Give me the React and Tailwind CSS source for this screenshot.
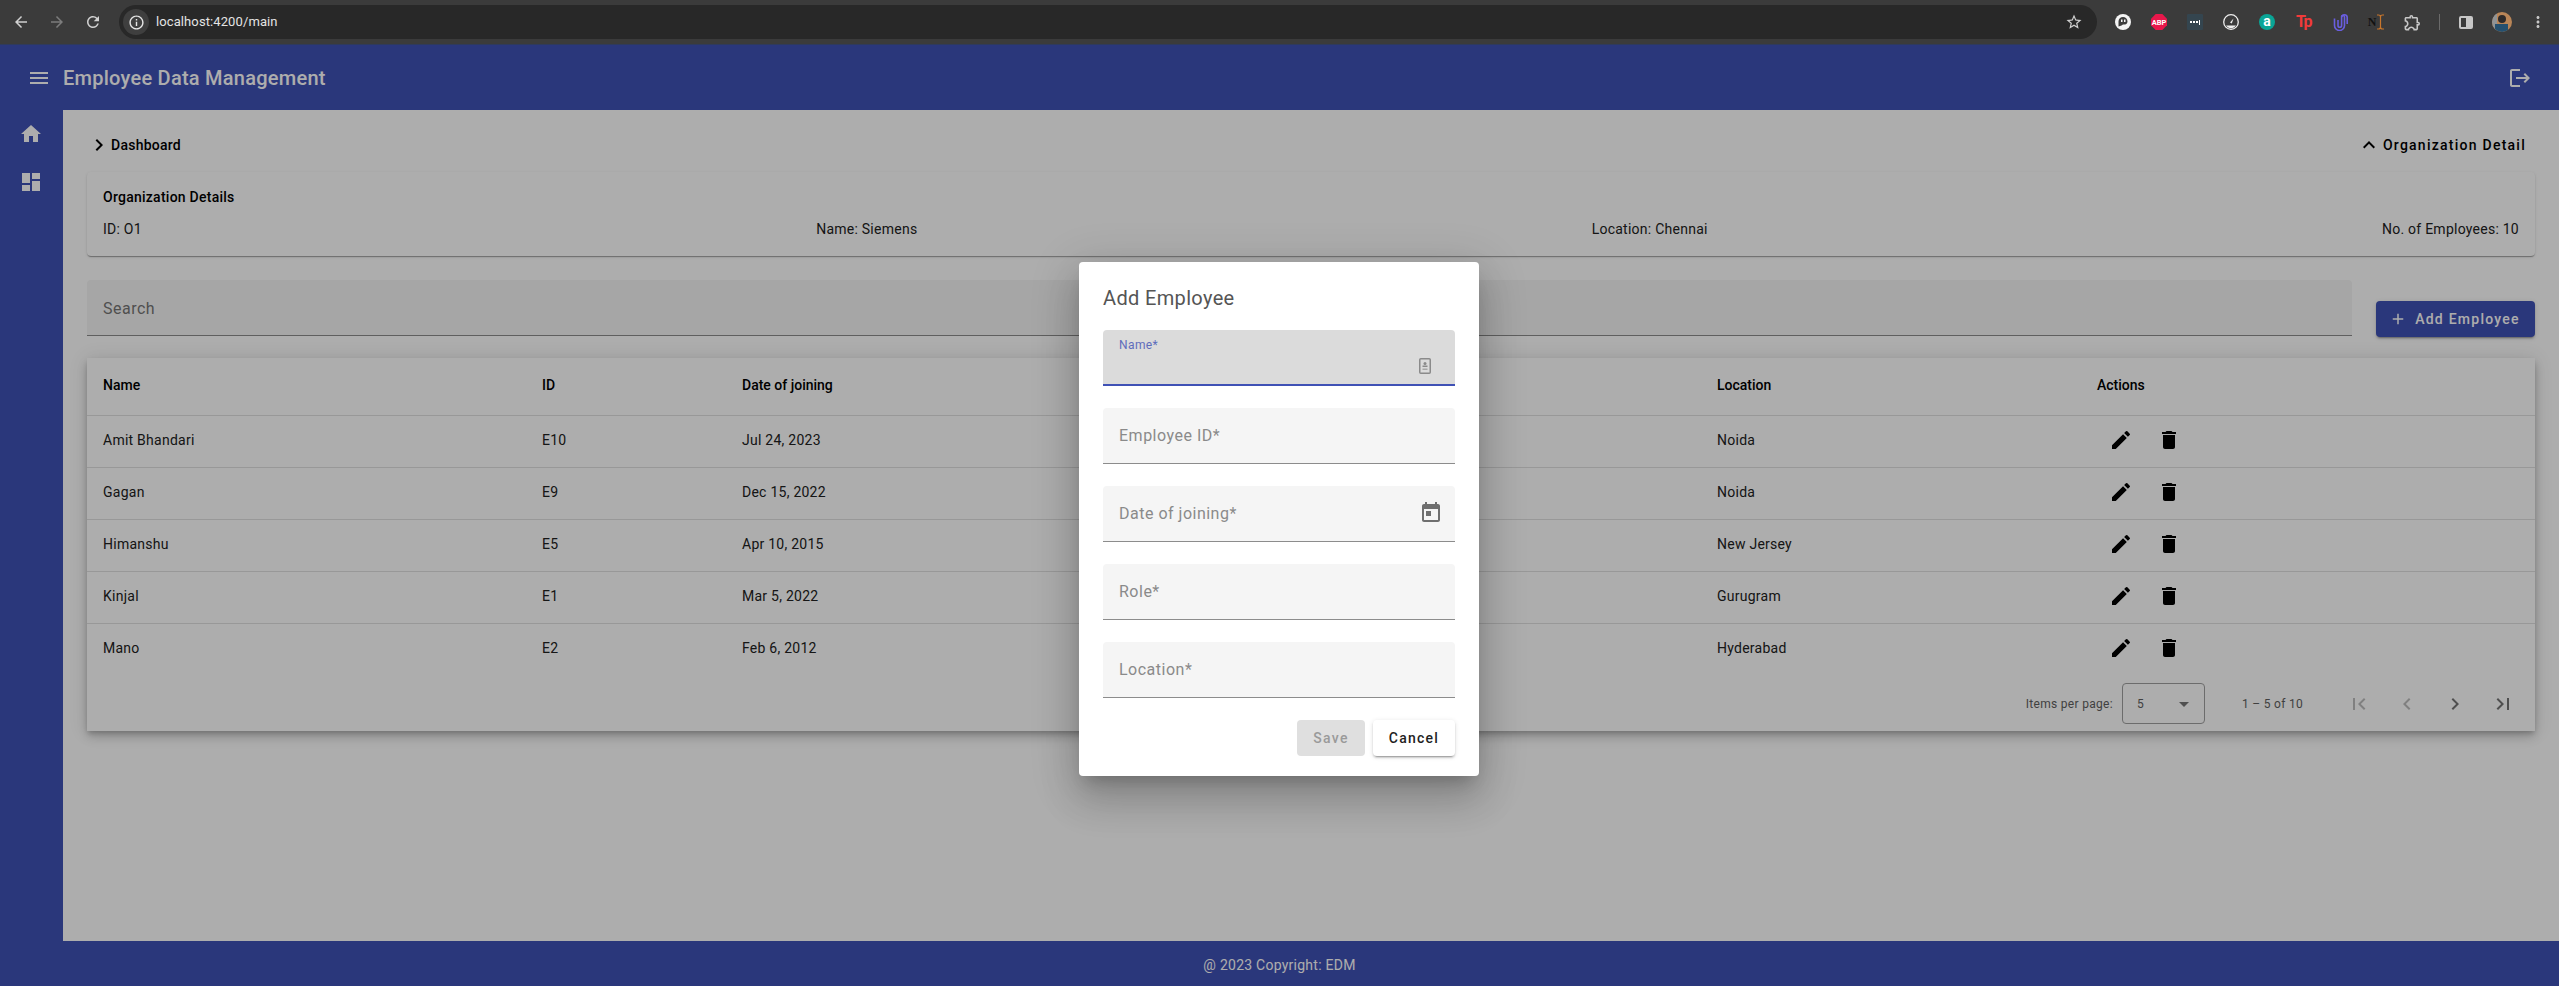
import React from "react";
import {
  MdAdd,
  MdArrowBack,
  MdArrowForward,
  MdChevronLeft,
  MdChevronRight,
  MdDashboard,
  MdDelete,
  MdEdit,
  MdFirstPage,
  MdHome,
  MdInfoOutline,
  MdKeyboardArrowUp,
  MdLastPage,
  MdLogout,
  MdMenu,
  MdMoreVert,
  MdOutlineExtension,
  MdRefresh,
  MdStarBorder,
} from "react-icons/md";

const employees = [
  { name: "Amit Bhandari", id: "E10", date: "Jul 24, 2023", location: "Noida" },
  { name: "Gagan", id: "E9", date: "Dec 15, 2022", location: "Noida" },
  { name: "Himanshu", id: "E5", date: "Apr 10, 2015", location: "New Jersey" },
  { name: "Kinjal", id: "E1", date: "Mar 5, 2022", location: "Gurugram" },
  { name: "Mano", id: "E2", date: "Feb 6, 2012", location: "Hyderabad" },
];

const columns = "grid grid-cols-[439px_200px_975px_380px_1fr] pl-4";

function ExtensionIcons() {
  return (
    <div className="flex items-center">
      <span className="w-[36px] flex justify-center">
        <svg width="16" height="16" viewBox="0 0 16 16">
          <circle cx="8" cy="8" r="8" fill="#f4f4f4" />
          <path d="M3.500 12.500V7.500a4.500 4.500 0 0 1 9 0c0 2.500-2 3-3.500 3-1 0-2 .5-2.500 1z" fill="#3c3c3c" />
          <rect x="6" y="5.500" width="1.500" height="2.500" fill="#f4f4f4" />
          <rect x="9" y="5.500" width="1.500" height="2.500" fill="#f4f4f4" />
        </svg>
      </span>
      <span className="w-[36px] flex justify-center">
        <svg width="16" height="16" viewBox="0 0 16 16">
          <polygon points="4.700,0 11.300,0 16,4.700 16,11.300 11.300,16 4.700,16 0,11.300 0,4.700" fill="#e8174b" />
          <text x="8" y="10.700" textAnchor="middle" fontSize="7.500" fontWeight="700" fill="#ffffff" fontFamily="Roboto, sans-serif">ABP</text>
        </svg>
      </span>
      <span className="w-[36px] flex justify-center">
        <span className="w-[16px] h-[16px] rounded-[1px] bg-[#34454f] flex items-center justify-center gap-[1px]">
          <i className="w-[2px] h-[2px] bg-white" />
          <i className="w-[2px] h-[2px] bg-white" />
          <i className="w-[2px] h-[2px] bg-white" />
          <i className="w-[1px] h-[5px] bg-white" />
        </span>
      </span>
      <span className="w-[36px] flex justify-center">
        <svg width="16" height="16" viewBox="0 0 16 16">
          <circle cx="8" cy="8" r="7.300" fill="#3c3c3c" stroke="#eeeeee" strokeWidth="1.300" />
          <path d="M2.500 8.500a5.500 5.500 0 0 0 11 0 5.500 5.500 0 0 1-11 0z" fill="#eeeeee" />
          <path d="M3 11.500a6 6 0 0 0 10 0z" fill="#eeeeee" />
          <path d="M7 8.500l3.500-4-1.700 5z" fill="#eeeeee" />
        </svg>
      </span>
      <span className="w-[36px] flex justify-center">
        <span className="w-[16px] h-[16px] rounded-full bg-[#0aa596] text-white text-[14px] font-bold leading-[15px] text-center">a</span>
      </span>
      <span className="w-[37px] flex justify-center">
        <span className="text-[#f23a3a] text-[16px] font-bold leading-none tracking-[-1.5px]">Tp</span>
      </span>
      <span className="w-[36px] flex justify-center">
        <svg width="16" height="18" viewBox="0 0 16 18" fill="none" stroke="#6a5ee0" strokeWidth="1.600">
          <path d="M6 7v5.500a1.800 1.800 0 0 0 3.600 0V4.500a2.800 2.800 0 0 1 5.600 0V11" />
          <path d="M2.500 5.500v7a5 5 0 0 0 10 0V4a1.500 1.500 0 0 0-3 0" />
        </svg>
      </span>
      <span className="w-[36px] flex justify-center items-center gap-[1px]">
        <span className="text-[#111111] text-[12px] font-bold leading-none font-['Liberation_Serif',serif]">N</span>
        <svg width="7" height="16" viewBox="0 0 7 16" fill="none" stroke="#c8762c" strokeWidth="1.200">
          <path d="M0 1h1.500c1 0 2 .5 2 2v10c0 1.500 1 2 2 2H7M7 1H5.500c-1 0-2 .5-2 2M3.500 13c0 1.500-1 2-2 2H0" />
        </svg>
      </span>
      <span className="w-[36px] flex justify-center">
        <MdOutlineExtension className="text-[#c7c7c7] text-[19px]" />
      </span>
    </div>
  );
}

function BrowserBar() {
  return (
    <div className="h-[45px] bg-[#3b3b3b] flex items-center text-[#c7c7c7] border-b border-[#2f3a5c]">
      <div className="w-[119px] pl-[3px] flex items-center">
        <MdArrowBack className="text-[18px] w-[36px] text-[#d0d0d0]" />
        <MdArrowForward className="text-[18px] w-[36px] text-[#7c7c7c]" />
        <MdRefresh className="text-[18px] w-[36px] text-[#d0d0d0]" />
      </div>
      <div className="w-[1978px] h-[34px] rounded-full bg-[#282828] flex items-center pl-[4px] pr-[14px]">
        <span className="w-[26px] h-[26px] rounded-full bg-[#3f3f3f] flex items-center justify-center">
          <MdInfoOutline className="text-[#e6e6e6] text-[17px]" />
        </span>
        <span className="ml-[7px] text-[13px] text-[#e4e4e4] tracking-[0.1px]">localhost:4200/main</span>
        <MdStarBorder className="ml-auto text-[18px] text-[#d0d0d0]" />
      </div>
      <div className="ml-[8px]">
        <ExtensionIcons />
      </div>
      <span className="ml-[9px] w-[1px] h-[16px] bg-[#6a6a6a]" />
      <span className="ml-[19px] w-[14px] h-[13px] rounded-[2px] border-2 border-[#c7c7c7] flex justify-end">
        <i className="w-[5px] bg-[#c7c7c7]" />
      </span>
      <svg className="ml-[19px]" width="20" height="20" viewBox="0 0 20 20">
        <defs>
          <clipPath id="avatar-clip">
            <circle cx="10" cy="10" r="10" />
          </clipPath>
        </defs>
        <g clipPath="url(#avatar-clip)">
          <rect width="20" height="20" fill="#b98557" />
          <rect width="5" height="20" fill="#8f9396" />
          <circle cx="10" cy="7" r="4" fill="#2d2a2a" />
          <rect x="3" y="12" width="13" height="8" fill="#25506f" />
        </g>
      </svg>
      <MdMoreVert className="ml-[17px] text-[18px] text-[#c7c7c7]" />
    </div>
  );
}

function Field({ label, icon, focused }) {
  return (
    <div
      className={`relative h-[56px] rounded-t-[4px] ${
        focused ? "bg-[#dbdbdb] border-b-2 border-[#3f51b5]" : "bg-[#f5f5f5] border-b border-[#8c8c8c]"
      }`}
    >
      {focused ? (
        <span className="absolute left-4 top-[7px] text-[12px] leading-4 tracking-[0.4px] text-[#3f51b5] opacity-80">{label}</span>
      ) : (
        <span className="absolute left-4 top-[16px] text-[16px] leading-6 tracking-[0.5px] text-[#8a8a8a]">{label}</span>
      )}
      {icon}
    </div>
  );
}

function AddEmployeeDialog() {
  return (
    <div className="absolute inset-0 bg-black/32 flex justify-center items-start pt-[217px] pr-[1px]">
      <div className="w-[400px] h-[514px] bg-white rounded-[4px] px-6 pt-[22px] shadow-[0_11px_15px_-7px_rgba(0,0,0,0.2),0_24px_38px_3px_rgba(0,0,0,0.14),0_9px_46px_8px_rgba(0,0,0,0.12)]">
        <h2 className="text-[20px] leading-[28px] tracking-[0.35px] text-[#555555]">Add Employee</h2>
        <div className="mt-[18px] flex flex-col gap-[22px]">
          <Field
            label="Name*"
            focused
            icon={
              <svg className="absolute right-[24px] top-[28px]" width="12" height="16" viewBox="0 0 12 16" fill="none">
                <rect x="0.750" y="0.750" width="10.500" height="14.500" rx="1" stroke="#8a8a8a" strokeWidth="1.500" />
                <circle cx="6" cy="5.500" r="1.500" fill="#8a8a8a" />
                <rect x="3.500" y="7.500" width="5" height="1.500" fill="#8a8a8a" />
                <rect x="3.500" y="10.500" width="5" height="1.500" fill="#a8a8a8" />
              </svg>
            }
          />
          <Field label="Employee ID*" />
          <Field
            label="Date of joining*"
            icon={
              <svg className="absolute right-[12px] top-[15px]" width="24" height="24" viewBox="0 0 24 24" fill="#6f6f6f">
                <path d="M19 3h-1V1h-2v2H8V1H6v2H5c-1.110 0-1.990.9-1.990 2L3 19c0 1.100.89 2 2 2h14c1.100 0 2-.9 2-2V5c0-1.100-.9-2-2-2zm0 16H5V8h14v11zM7 10h5v5H7z" />
              </svg>
            }
          />
          <Field label="Role*" />
          <Field label="Location*" />
        </div>
        <div className="mt-[22px] flex justify-end gap-2">
          <button className="w-[68px] h-9 rounded-[4px] bg-[#dfdfdf] text-[14px] font-medium tracking-[1.25px] text-[#9a9a9a]">Save</button>
          <button className="w-[82px] h-9 rounded-[4px] bg-white text-[14px] font-medium tracking-[1.25px] text-[#1f1f1f] shadow-[0_3px_1px_-2px_rgba(0,0,0,0.2),0_2px_2px_0_rgba(0,0,0,0.14),0_1px_5px_0_rgba(0,0,0,0.12)]">Cancel</button>
        </div>
      </div>
    </div>
  );
}

export default function App() {
  return (
    <div className="w-[2559px] h-[986px] overflow-hidden font-['Roboto',sans-serif]">
      <BrowserBar />
      <div className="relative h-[941px] flex flex-col bg-white">
        {/* Toolbar */}
        <header className="h-[65px] shrink-0 bg-[#3f51b5] text-white flex items-center px-[27px]">
          <MdMenu className="text-[24px]" />
          <span className="ml-[12px] text-[20px] font-medium tracking-[0.25px]">Employee Data Management</span>
          <MdLogout className="ml-auto text-[24px]" />
        </header>

        <div className="flex-1 flex min-h-0">
          {/* Side nav */}
          <aside className="w-[63px] shrink-0 bg-[#3f51b5] text-white flex flex-col items-center pt-[12px] gap-[24px] pr-[1px]">
            <MdHome className="text-[24px]" />
            <MdDashboard className="text-[24px]" />
          </aside>

          {/* Main */}
          <main className="flex-1 px-[24px] text-[14px] tracking-[0.25px] text-[#212121]">
            <div className="h-[70px] flex items-center justify-between">
              <div className="flex items-center font-medium text-black">
                <MdChevronRight className="text-[24px]" />
                Dashboard
              </div>
              <div className="flex items-center font-medium tracking-[1.25px] text-black pr-[9px]">
                <MdKeyboardArrowUp className="text-[24px] mr-[2px]" />
                Organization Detail
              </div>
            </div>

            <section className="-mt-[8px] h-[84px] rounded-[4px] bg-white px-4 pt-[17px] shadow-[0_2px_1px_-1px_rgba(0,0,0,0.2),0_1px_1px_0_rgba(0,0,0,0.14),0_1px_3px_0_rgba(0,0,0,0.12)]">
              <h3 className="font-medium text-black leading-4">Organization Details</h3>
              <div className="mt-[16px] flex justify-between leading-4">
                <span>ID: O1</span>
                <span>Name: Siemens</span>
                <span>Location: Chennai</span>
                <span>No. of Employees: 10</span>
              </div>
            </section>

            <div className="mt-[24px] flex items-start gap-6">
              <div className="flex-1 h-[56px] rounded-t-[4px] bg-[#f5f5f5] border-b border-[#8c8c8c] pl-4 pt-[2px] flex items-center text-[16px] tracking-[0.5px] text-[#757575]">
                Search
              </div>
              <button className="mt-[21px] w-[159px] h-9 rounded-[4px] bg-[#3f51b5] text-white flex items-center justify-center gap-2 pr-[2px] font-medium tracking-[1.25px] shadow-[0_3px_1px_-2px_rgba(0,0,0,0.2),0_2px_2px_0_rgba(0,0,0,0.14),0_1px_5px_0_rgba(0,0,0,0.12)]">
                <MdAdd className="text-[18px]" />
                Add Employee
              </button>
            </div>

            {/* Table */}
            <section className="mt-[21px] bg-white shadow-[0_3px_5px_-1px_rgba(0,0,0,0.2),0_6px_10px_0_rgba(0,0,0,0.14),0_1px_18px_0_rgba(0,0,0,0.12)]">
              <div className={`${columns} h-[58px] pb-[2px] items-center font-medium tracking-normal text-black border-b border-[#e0e0e0]`}>
                <span>Name</span>
                <span>ID</span>
                <span>Date of joining</span>
                <span>Location</span>
                <span>Actions</span>
              </div>
              {employees.map((emp, i) => (
                <div
                  key={emp.id}
                  className={`${columns} h-[52px] items-center ${i < employees.length - 1 ? "pb-[3px] border-b border-[#e0e0e0]" : "pb-[4px]"}`}
                >
                  <span>{emp.name}</span>
                  <span>{emp.id}</span>
                  <span>{emp.date}</span>
                  <span>{emp.location}</span>
                  <span className="flex text-black">
                    <span className="w-12 flex justify-center"><MdEdit className="text-[24px]" /></span>
                    <span className="w-12 flex justify-center"><MdDelete className="text-[24px]" /></span>
                  </span>
                </div>
              ))}
              <div className="h-[55px] flex items-center justify-end pr-[8px] text-[12px] tracking-normal text-[#5f5f5f]">
                <span className="tracking-[0.3px]">Items per page:</span>
                <div className="relative ml-[9px] w-[83px] h-[41px] rounded-[4px] border border-[#a0a0a0] flex items-center pl-[14px]">
                  5
                  <span className="absolute right-[15px] top-[18px] border-x-[5px] border-x-transparent border-t-[5px] border-t-[#757575]" />
                </div>
                <span className="ml-[37px] mr-[32px] tracking-[0.3px]">1 – 5 of 10</span>
                <span className="w-12 flex justify-center text-[#bdbdbd]"><MdFirstPage className="text-[24px]" /></span>
                <span className="w-12 flex justify-center text-[#bdbdbd]"><MdChevronLeft className="text-[24px]" /></span>
                <span className="w-12 flex justify-center text-[#757575]"><MdChevronRight className="text-[24px]" /></span>
                <span className="w-12 flex justify-center text-[#757575]"><MdLastPage className="text-[24px]" /></span>
              </div>
            </section>
          </main>
        </div>

        <footer className="h-[45px] shrink-0 bg-[#3f51b5] pt-[3px] text-white text-[14px] tracking-[0.25px] flex items-center justify-center">@ 2023 Copyright: EDM</footer>

        <AddEmployeeDialog />
      </div>
    </div>
  );
}
